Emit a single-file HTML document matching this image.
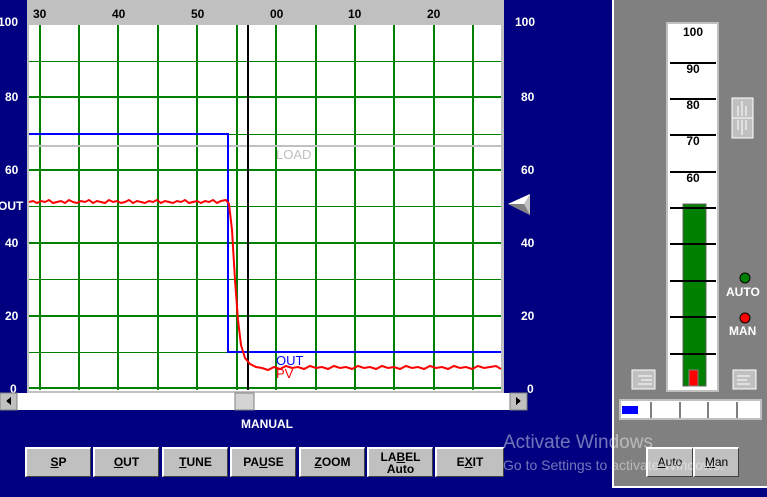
<!DOCTYPE html>
<html><head><style>
body{margin:0;width:767px;height:497px;background:#000080;position:relative;overflow:hidden;font-family:"Liberation Sans",Arial,sans-serif;}
.lbl{position:absolute;color:#fff;font-weight:bold;font-size:12px;}
.btn{position:absolute;top:447px;height:30px;width:66px;background:#c0c0c0;border-top:2px solid #fff;border-left:2px solid #fff;border-right:1px solid #404040;border-bottom:1px solid #404040;box-sizing:border-box;font-weight:bold;font-size:12px;text-align:center;line-height:27px;color:#000;}
.btn2{line-height:12px;padding-top:2px;}
.tk{position:absolute;left:670px;width:46px;height:2px;background:#000;}
.tl{position:absolute;left:670px;width:46px;text-align:center;font-weight:bold;font-size:12px;}
</style></head><body>
<svg style="position:absolute;left:0;top:0" width="767" height="497" shape-rendering="crispEdges">
<rect x="27" y="0" width="477" height="393" fill="#c0c0c0"/>
<rect x="29" y="25" width="472" height="366" fill="#fff"/>
<g stroke="#008000" stroke-width="1">
<line x1="29" y1="61.5" x2="501" y2="61.5"/><line x1="29" y1="134.5" x2="501" y2="134.5"/><line x1="29" y1="206.5" x2="501" y2="206.5"/><line x1="29" y1="279.5" x2="501" y2="279.5"/><line x1="29" y1="352.5" x2="501" y2="352.5"/>
</g>
<g stroke="#008000" stroke-width="2">
<line x1="29" y1="97" x2="501" y2="97"/><line x1="29" y1="170" x2="501" y2="170"/><line x1="29" y1="243" x2="501" y2="243"/><line x1="29" y1="316" x2="501" y2="316"/><line x1="29" y1="388" x2="501" y2="388"/>
<line x1="40" y1="25" x2="40" y2="390"/><line x1="79" y1="25" x2="79" y2="390"/><line x1="118" y1="25" x2="118" y2="390"/><line x1="158" y1="25" x2="158" y2="390"/><line x1="197" y1="25" x2="197" y2="390"/><line x1="237" y1="25" x2="237" y2="390"/><line x1="276" y1="25" x2="276" y2="390"/><line x1="316" y1="25" x2="316" y2="390"/><line x1="355" y1="25" x2="355" y2="390"/><line x1="394" y1="25" x2="394" y2="390"/><line x1="434" y1="25" x2="434" y2="390"/><line x1="473" y1="25" x2="473" y2="390"/>
</g>
<line x1="29" y1="146" x2="501" y2="146" stroke="#c0c0c0" stroke-width="2"/>
<polyline points="29,134 228,134 228,352 501,352" fill="none" stroke="#0000ff" stroke-width="2"/>
<line x1="248" y1="25" x2="248" y2="390" stroke="#000" stroke-width="2"/>
<polyline shape-rendering="auto" points="29,202 33,201 37,203 41,201 45,202 49,200 53,203 57,202 61,201 65,203 69,200 73,202 77,203 81,201 85,202 89,200 93,203 97,201 101,202 105,203 109,200 113,202 117,201 121,203 125,202 129,200 133,203 137,201 141,202 145,203 149,201 153,202 157,200 161,203 165,201 169,202 173,203 177,201 181,202 185,200 189,203 193,202 197,201 201,203 205,201 209,202 213,200 217,203 221,201 226,200 229,204 232,230 235,280 238,320 241,345 245,358 250,364 256,367 262,368 268,370 274,367 280,369 286,366 292,368 298,367 304,369 310,366 316,368 322,367 328,369 334,366 340,368 346,367 352,369 358,366 364,368 370,367 376,369 382,366 388,368 394,367 400,369 406,366 412,368 418,367 424,369 430,366 436,368 442,367 448,369 454,366 460,368 466,367 472,369 478,366 484,368 490,367 496,366 501,369" fill="none" stroke="#ff0000" stroke-width="2"/>
<text x="276" y="159" font-size="13" fill="#c0c0c0" font-family="Liberation Sans">LOAD</text>
<text x="276" y="365" font-size="13" fill="#0000ff" font-family="Liberation Sans">OUT</text>
<text x="276" y="378" font-size="13" fill="#ff0000" font-family="Liberation Sans">PV</text>
<g font-family="Liberation Sans" font-weight="bold" font-size="12" fill="#000">
<text x="33" y="18">30</text><text x="112" y="18">40</text><text x="191" y="18">50</text><text x="270" y="18">00</text><text x="348" y="18">10</text><text x="427" y="18">20</text>
</g>
<g font-family="Liberation Sans" font-weight="bold" font-size="12" fill="#fff">
<text x="-2" y="26">100</text><text x="5" y="101">80</text><text x="5" y="174">60</text><text x="-2" y="210">OUT</text><text x="5" y="247">40</text><text x="5" y="320">20</text><text x="10" y="393">0</text>
<text x="515" y="26">100</text><text x="521" y="101">80</text><text x="521" y="174">60</text><text x="521" y="247">40</text><text x="521" y="320">20</text><text x="527" y="393">0</text>
</g>
<g shape-rendering="auto">
<polygon points="508,204 530,194 530,215" fill="#c0c0c0"/>
<polygon points="508,204 530,194 524,204" fill="#fff"/>
<polygon points="508,204 530,215 524,204" fill="#808080"/>
</g>
<rect x="0" y="393" width="527" height="17" fill="#fff"/>
<rect x="0" y="393" width="17" height="17" fill="#c0c0c0" stroke="#808080"/>
<polygon points="6,401 11,397 11,405" fill="#000"/>
<rect x="510" y="393" width="17" height="17" fill="#c0c0c0" stroke="#808080"/>
<polygon points="521,401 516,397 516,405" fill="#000"/>
<rect x="235" y="393" width="19" height="17" fill="#d4d4d4" stroke="#808080"/>
<rect x="612" y="0" width="155" height="488" fill="#808080"/>
<line x1="613" y1="0" x2="613" y2="488" stroke="#fff" stroke-width="2"/>
<line x1="612" y1="487" x2="767" y2="487" stroke="#fff" stroke-width="2"/>
<rect x="667" y="23" width="51" height="368" fill="#fff" stroke="#c0c0c0" stroke-width="2"/>
<rect x="670" y="26" width="46" height="362" fill="#fff"/>
<rect x="683" y="204" width="23" height="182" fill="#008000" stroke="#606060"/>
<rect x="689" y="370" width="9" height="16" fill="#ff0000" stroke="#808080"/>
<rect x="732" y="98" width="21" height="40" fill="#c0c0c0" stroke="#fff"/>
<line x1="732" y1="118" x2="753" y2="118" stroke="#fff"/>
<g stroke="#fff"><line x1="738" y1="106" x2="738" y2="116"/><line x1="742" y1="101" x2="742" y2="116"/><line x1="746" y1="106" x2="746" y2="116"/><line x1="738" y1="120" x2="738" y2="130"/><line x1="742" y1="120" x2="742" y2="135"/><line x1="746" y1="120" x2="746" y2="130"/></g>
<g shape-rendering="auto">
<circle cx="745" cy="278" r="5" fill="#008000" stroke="#000"/>
<circle cx="745" cy="318" r="5" fill="#ff0000" stroke="#000"/>
<text x="726" y="296" font-size="12" font-weight="bold" fill="#fff" font-family="Liberation Sans">AUTO</text>
<text x="729" y="335" font-size="12" font-weight="bold" fill="#fff" font-family="Liberation Sans">MAN</text>
</g>
<rect x="632" y="370" width="23" height="19" fill="#c0c0c0" stroke="#fff"/>
<g stroke="#fff"><line x1="638" y1="376" x2="652" y2="376"/><line x1="641" y1="380" x2="652" y2="380"/><line x1="638" y1="384" x2="652" y2="384"/></g>
<rect x="733" y="370" width="23" height="19" fill="#c0c0c0" stroke="#fff"/>
<g stroke="#fff"><line x1="737" y1="376" x2="750" y2="376"/><line x1="737" y1="380" x2="747" y2="380"/><line x1="737" y1="384" x2="750" y2="384"/></g>
<rect x="620" y="400" width="141" height="19" fill="#fff" stroke="#c0c0c0" stroke-width="2"/>
<rect x="622" y="406" width="16" height="8" fill="#0000ff"/>
<g stroke="#000"><line x1="651" y1="402" x2="651" y2="418"/><line x1="680" y1="402" x2="680" y2="418"/><line x1="708" y1="402" x2="708" y2="418"/><line x1="737" y1="402" x2="737" y2="418"/></g>
</svg>
<div class="tk" style="top:62px"></div><div class="tk" style="top:98px"></div><div class="tk" style="top:134px"></div><div class="tk" style="top:171px"></div><div class="tk" style="top:207px"></div><div class="tk" style="top:243px"></div><div class="tk" style="top:280px"></div><div class="tk" style="top:316px"></div><div class="tk" style="top:353px"></div>
<div class="tl" style="top:25px">100</div><div class="tl" style="top:62px">90</div><div class="tl" style="top:98px">80</div><div class="tl" style="top:134px">70</div><div class="tl" style="top:171px">60</div>
<div class="lbl" style="left:241px;top:417px;">MANUAL</div>
<div class="btn" style="left:25px"><u>S</u>P</div>
<div class="btn" style="left:93px"><u>O</u>UT</div>
<div class="btn" style="left:162px"><u>T</u>UNE</div>
<div class="btn" style="left:230px">PA<u>U</u>SE</div>
<div class="btn" style="left:299px"><u>Z</u>OOM</div>
<div class="btn btn2" style="left:367px">LA<u>B</u>EL<br>Auto</div>
<div class="btn" style="left:435px;width:69px">E<u>X</u>IT</div>
<div class="btn" style="left:646px;width:47px;font-weight:normal;font-size:12px;"><u>A</u>uto</div>
<div class="btn" style="left:693px;width:46px;font-weight:normal;font-size:12px;"><u>M</u>an</div>
<div style="position:absolute;left:503px;top:432px;color:rgba(255,255,255,0.45);font-size:19px;">Activate Windows</div>
<div style="position:absolute;left:503px;top:457px;color:rgba(255,255,255,0.45);font-size:14px;">Go to Settings to activate Windows.</div>
</body></html>
